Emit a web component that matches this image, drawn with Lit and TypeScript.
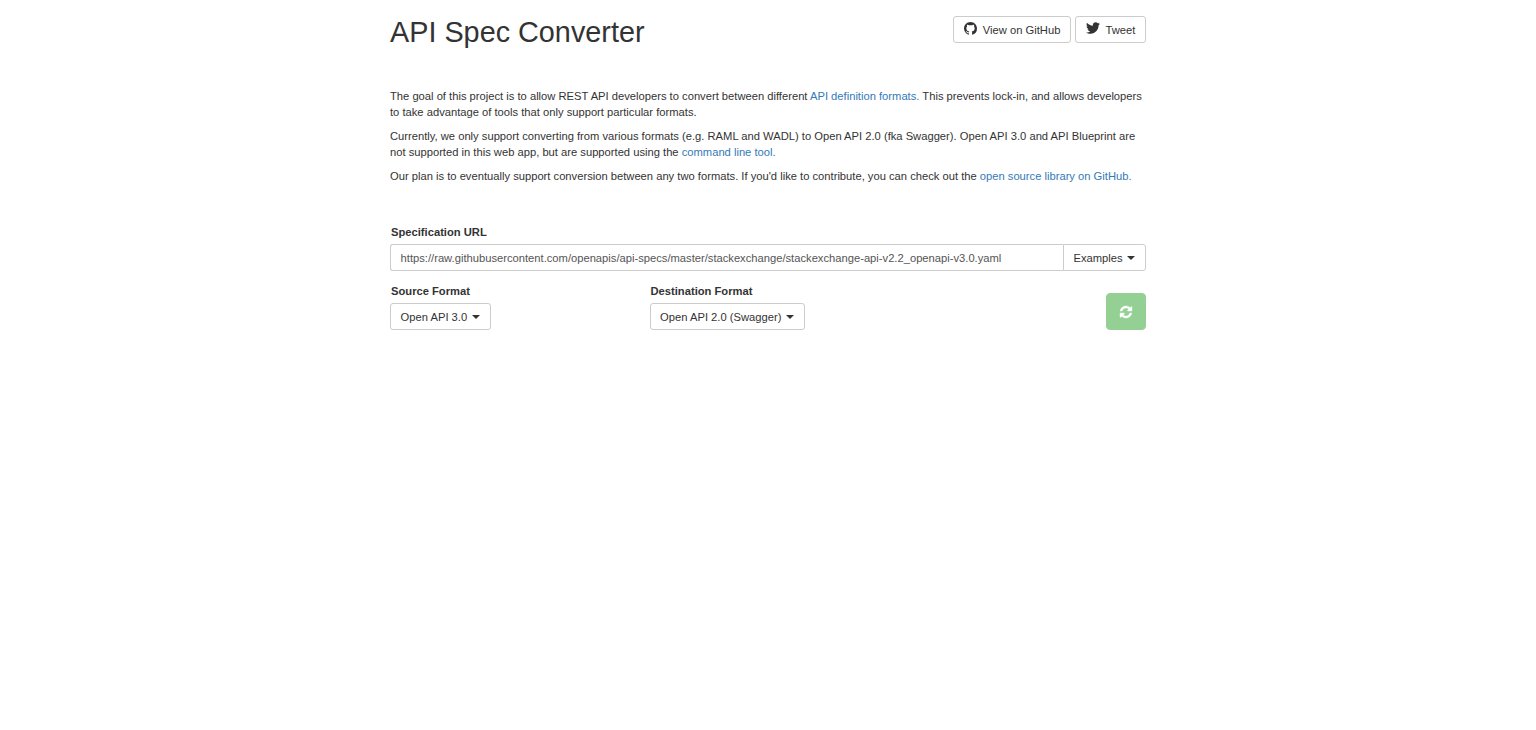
import { LitElement, html, css, svg } from "lit";
import { customElement } from "lit/decorators.js";

const gh = svg`<path d="M8 0C3.58 0 0 3.58 0 8c0 3.54 2.29 6.53 5.47 7.59.4.07.55-.17.55-.38 0-.19-.01-.82-.01-1.49-2.01.37-2.53-.49-2.69-.94-.09-.23-.48-.94-.82-1.13-.28-.15-.68-.52-.01-.53.63-.01 1.08.58 1.23.82.72 1.21 1.87.87 2.33.66.07-.52.28-.87.51-1.07-1.78-.2-3.64-.89-3.64-3.95 0-.87.31-1.59.82-2.15-.08-.2-.36-1.02.08-2.12 0 0 .67-.21 2.2.82.64-.18 1.32-.27 2-.27.68 0 1.36.09 2 .27 1.53-1.04 2.2-.82 2.2-.82.44 1.1.16 1.92.08 2.12.51.56.82 1.27.82 2.15 0 3.07-1.87 3.75-3.65 3.95.29.25.54.73.54 1.48 0 1.07-.01 1.93-.01 2.2 0 .21.15.46.55.38A8.013 8.013 0 0016 8c0-4.42-3.58-8-8-8z"/>`;
const tw = svg`<path d="M459.37 151.716c.325 4.548.325 9.097.325 13.645 0 138.72-105.583 298.558-298.558 298.558-59.452 0-114.68-17.219-161.137-47.106 8.447.974 16.568 1.299 25.34 1.299 49.055 0 94.213-16.568 130.274-44.832-46.132-.975-84.792-31.188-98.112-72.772 6.498.974 12.995 1.624 19.818 1.624 9.421 0 18.843-1.3 27.614-3.573-48.081-9.747-84.143-51.98-84.143-102.985v-1.299c13.969 7.797 30.214 12.67 47.431 13.319-28.264-18.843-46.781-51.005-46.781-87.391 0-19.492 5.197-37.36 14.294-52.954 51.655 63.675 129.3 105.258 216.365 109.807-1.624-7.797-2.599-15.918-2.599-24.04 0-57.828 46.782-104.934 104.934-104.934 30.213 0 57.502 12.67 76.67 33.137 23.715-4.548 46.456-13.32 66.599-25.34-7.798 24.366-24.366 44.833-46.132 57.827 21.117-2.273 41.584-8.122 60.426-16.243-14.292 20.791-32.161 39.308-52.628 54.253z"/>`;
const rf = svg`<path d="M1639 1056q0 5-1 7-64 268-268 434.5t-478 166.5q-146 0-282.5-55t-243.5-157l-129 129q-19 19-45 19t-45-19-19-45v-448q0-26 19-45t45-19h448q26 0 45 19t19 45-19 45l-137 137q71 66 161 102t187 36q134 0 250-65t186-179q11-17 53-117 8-23 30-23h192q13 0 22.5 9.5t9.5 22.5zm25-800v448q0 26-19 45t-45 19h-448q-26 0-45-19t-19-45 19-45l138-138q-148-137-349-137-134 0-250 65t-186 179q-11 17-53 117-8 23-30 23h-199q-13 0-22.5-9.5t-9.5-22.5v-7q65-268 270-434.5t480-166.5q146 0 284 55.5t245 156.5l130-129q19-19 45-19t45 19 19 45z"/>`;

@customElement("app-root")
export class AppRoot extends LitElement {
  static styles = css`
    :host { display: block; font-family: "Liberation Sans", Arial, sans-serif; font-size: 11.2px; line-height: 16px; color: #333; background: #fff; }
    * { box-sizing: border-box; }
    .wrap { width: 756px; margin: 0 auto; padding-top: 16px; min-height: 730px; }
    header { display: flex; justify-content: space-between; align-items: flex-start; height: 72px; }
    h1 { margin: 0; font-size: 28.8px; font-weight: 400; line-height: 32px; }
    .actions { display: flex; gap: 4px; }
    .btn { display: inline-flex; align-items: center; height: 27px; padding: 0 9.6px; border: 1px solid #ccc; border-radius: 3px; background: #fff; color: #333; font: inherit; white-space: nowrap; }
    .btn svg { fill: #333; display: block; }
    .gh { width: 13px; height: 13px; margin-right: 6px; margin-top: -2px; }
    .tw { width: 14px; height: 14px; margin-right: 6px; margin-top: -3px; }
    p { margin: 0 0 8px; }
    a { color: #337ab7; text-decoration: none; }
    form { margin-top: 40px; }
    label { display: block; font-weight: 700; height: 16px; padding-left: 1px; margin-bottom: 4px; }
    .group { display: flex; height: 27px; margin-bottom: 12px; }
    .url { flex: 1; min-width: 0; height: 27px; padding: 0 9.6px; border: 1px solid #ccc; border-right: 0; border-radius: 3px 0 0 3px; font: inherit; color: #555; outline: none; }
    .group .btn { border-radius: 0 3px 3px 0; }
    .caret { display: inline-block; width: 0; height: 0; margin-left: 4.8px; border-top: 4px solid #333; border-left: 4px solid transparent; border-right: 4px solid transparent; }
    .row { display: flex; align-items: flex-start; }
    .src { width: 259.5px; }
    .dst { flex: 1; }
    .go { width: 40px; height: 37px; margin-top: 10px; border: 1px solid #5cb85c; border-radius: 4px; background: #5cb85c; opacity: .65; display: flex; align-items: center; justify-content: center; padding: 0; }
    .go svg { width: 14px; height: 14px; fill: #fff; stroke: #fff; stroke-width: 50; display: block; }
  `;

  render() {
    return html`<div class="wrap">
      <header>
        <h1>API Spec Converter</h1>
        <div class="actions">
          <a class="btn"><svg class="gh" viewBox="0 0 16 16">${gh}</svg>View on GitHub</a>
          <a class="btn"><svg class="tw" viewBox="0 0 512 512">${tw}</svg>Tweet</a>
        </div>
      </header>
      <p>The goal of this project is to allow REST API developers to convert between different <a href="#">API definition formats.</a> This prevents lock-in, and allows developers to take advantage of tools that only support particular formats.</p>
      <p>Currently, we only support converting from various formats (e.g. RAML and WADL) to Open API 2.0 (fka Swagger). Open API 3.0 and API Blueprint are not supported in this web app, but are supported using the <a href="#">command line tool.</a></p>
      <p>Our plan is to eventually support conversion between any two formats. If you'd like to contribute, you can check out the <a href="#">open source library on GitHub.</a></p>
      <form>
        <label>Specification URL</label>
        <div class="group">
          <input class="url" .value=${"https://raw.githubusercontent.com/openapis/api-specs/master/stackexchange/stackexchange-api-v2.2_openapi-v3.0.yaml"} />
          <button class="btn" type="button">Examples<span class="caret"></span></button>
        </div>
        <div class="row">
          <div class="src"><label>Source Format</label><button class="btn" type="button">Open API 3.0<span class="caret"></span></button></div>
          <div class="dst"><label>Destination Format</label><button class="btn" type="button">Open API 2.0 (Swagger)<span class="caret"></span></button></div>
          <button class="go" type="button"><svg viewBox="0 0 1792 1792">${rf}</svg></button>
        </div>
      </form>
    </div>`;
  }
}
